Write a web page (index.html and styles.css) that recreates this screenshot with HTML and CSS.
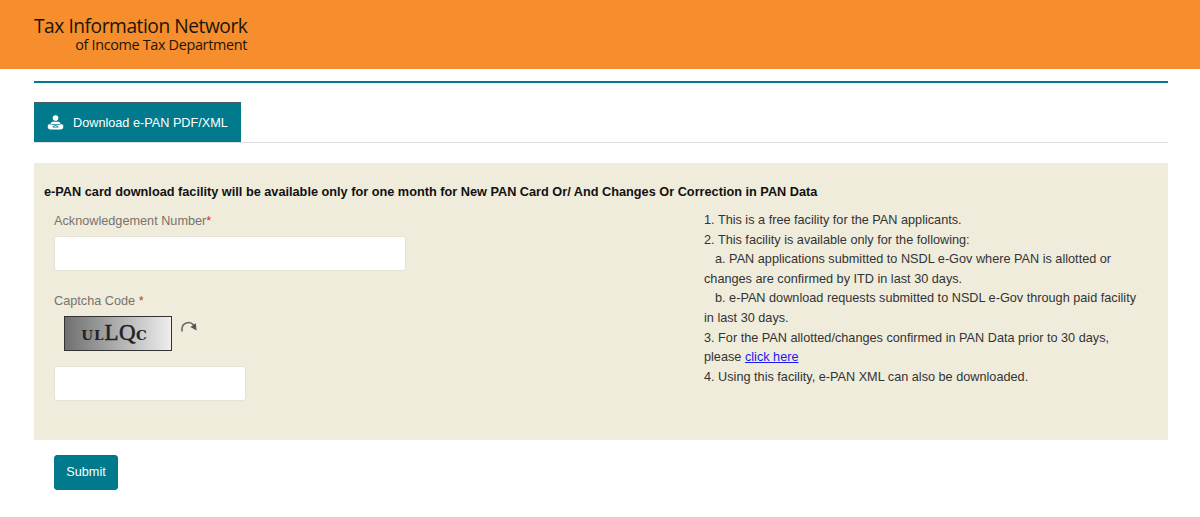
FILE: index.html
```html
<!DOCTYPE html>
<html lang="en">
<head>
    <meta charset="UTF-8">
    <title>e-PAN Download</title>
    <link rel="stylesheet" href="styles.css">
</head>
<body>
    <div class="header">
        <div class="brand">
            <div class="brand-main">Tax Information Network</div>
            <div class="brand-sub">of Income Tax Department</div>
        </div>
    </div>

    <div class="container">
        <div class="tabs">
            <div class="tab">
                <svg class="tab-icon" viewBox="0 0 18 16">
                    <circle cx="9" cy="3.2" r="3"/>
                    <path d="M5 7.2h8l1.6 2.6H3.4z"/>
                    <path d="M0.8 10.4l2.2-.6 6 1.6 6-1.6 2.2.6v3.6l-2.2 1.4H3l-2.2-1.4z"/>
                    <path class="tab-icon-cut" d="M6 11.6l3 1 3-1v1.6H6z"/>
                </svg>
                <span>Download e-PAN PDF/XML</span>
            </div>
        </div>

        <div class="panel">
            <h4 class="notice">e-PAN card download facility will be available only for one month for New PAN Card Or/ And Changes Or Correction in PAN Data</h4>
            <div class="panel-cols">
                <div class="form-col">
                    <div class="form-group">
                        <label for="ackNo">Acknowledgement Number<span class="req">*</span></label>
                        <input type="text" id="ackNo" class="input-wide">
                    </div>
                    <div class="form-group">
                        <label for="captcha">Captcha Code <span class="req">*</span></label>
                        <div class="captcha-row">
                            <div class="captcha-img"><span class="small">UL</span><span class="big">LQ</span><span class="small">C</span></div>
                            <svg class="refresh" viewBox="0 0 18 16">
                                <path d="M2 12.5V10A6.5 6.5 0 0 1 13.6 6" fill="none" stroke="#666" stroke-width="1.6"/>
                                <path d="M16.6 11.5l-6.2-3.4 5.4-3.8z" fill="#555"/>
                            </svg>
                        </div>
                        <input type="text" id="captcha" class="input-small">
                    </div>
                </div>
                <div class="info-col">
                    <p>1. This is a free facility for the PAN applicants.</p>
                    <p>2. This facility is available only for the following:</p>
                    <p class="sub">a. PAN applications submitted to NSDL e-Gov where PAN is allotted or changes are confirmed by ITD in last 30 days.</p>
                    <p class="sub">b. e-PAN download requests submitted to NSDL e-Gov through paid facility in last 30 days.</p>
                    <p>3. For the PAN allotted/changes confirmed in PAN Data prior to 30 days,<br>please <a href="#">click here</a></p>
                    <p>4. Using this facility, e-PAN XML can also be downloaded.</p>
                </div>
            </div>
        </div>

        <button type="button" class="submit-btn">Submit</button>
    </div>
</body>
</html>
```

FILE: styles.css
```css
* {
    margin: 0;
    padding: 0;
    box-sizing: border-box;
}

body {
    font-family: 'Liberation Sans', Arial, sans-serif;
    font-size: 12.7px;
    color: #333;
    background: #fff;
}

.header {
    height: 69px;
    background: #f68e2d;
    padding: 14px 0 0 34px;
}

.brand {
    width: 213px;
    font-family: 'Open Sans', sans-serif;
    color: #1d1508;
    text-align: right;
}

.brand-main {
    font-size: 19.2px;
    line-height: 23px;
    letter-spacing: -0.46px;
    white-space: nowrap;
}

.brand-sub {
    font-size: 14.4px;
    line-height: 15px;
    letter-spacing: -0.33px;
    white-space: nowrap;
}

.container {
    margin: 12px 32px 0 34px;
    border-top: 2px solid #007a8c;
}

.tabs {
    margin-top: 19px;
    height: 41px;
    border-bottom: 1px solid #ddd;
}

.tab {
    display: inline-flex;
    align-items: center;
    gap: 9px;
    width: 207px;
    height: 40px;
    padding-left: 13px;
    background: #007a8c;
    border-top: 1px solid #4a5a60;
    color: #fff;
}

.tab-icon {
    width: 17px;
    height: 15px;
    fill: #fff;
}

.tab-icon-cut {
    fill: #007a8c;
}

.panel {
    margin-top: 20px;
    height: 277px;
    background: #efecdc;
    padding: 21px 10px 0 10px;
}

.notice {
    font-size: 12.73px;
    line-height: 15px;
    font-weight: bold;
    color: #111;
}

.panel-cols {
    display: flex;
    margin-top: 11px;
}

.form-col {
    width: 660px;
    padding: 3px 0 0 10px;
}

.form-group {
    margin-bottom: 22px;
}

.form-group label {
    display: block;
    line-height: 17px;
    color: #77736b;
    margin-bottom: 6px;
}

.req {
    color: #c0392b;
}

input {
    display: block;
    height: 35px;
    background: #fff;
    border: 1px solid #e6e3d6;
    border-radius: 3px;
}

.input-wide {
    width: 352px;
}

.input-small {
    width: 192px;
}

.captcha-row {
    display: flex;
    align-items: flex-start;
    gap: 8px;
    margin: 1px 0 15px 10px;
}

.captcha-img {
    width: 108px;
    height: 35px;
    display: flex;
    align-items: baseline;
    justify-content: center;
    padding-right: 7px;
    background: linear-gradient(90deg, #707070 0%, #eeeeee 100%);
    border: 1px solid #333;
    font-family: 'DejaVu Serif', serif;
    line-height: 32px;
    font-weight: bold;
    color: #222;
}

.captcha-img .small {
    font-size: 13.5px;
    letter-spacing: 1px;
}

.captcha-img .big {
    font-family: 'Liberation Serif', serif;
    font-size: 23px;
    font-weight: normal;
    letter-spacing: 0.5px;
    -webkit-text-stroke: 0.5px #222;
}

.refresh {
    width: 18px;
    height: 16px;
    margin-top: 3px;
}

.info-col {
    width: 440px;
    margin-top: 1px;
    line-height: 19.6px;
    color: #333;
}

.info-col .sub {
    text-indent: 11px;
}

.info-col a {
    color: #1a1aee;
}

.submit-btn {
    display: block;
    margin: 15px 0 0 20px;
    width: 64px;
    height: 35px;
    padding-bottom: 2px;
    background: #007a8c;
    color: #fff;
    border: 1px solid #00788a;
    border-radius: 3px;
    font-family: 'Liberation Sans', Arial, sans-serif;
    font-size: 12.7px;
}
```
